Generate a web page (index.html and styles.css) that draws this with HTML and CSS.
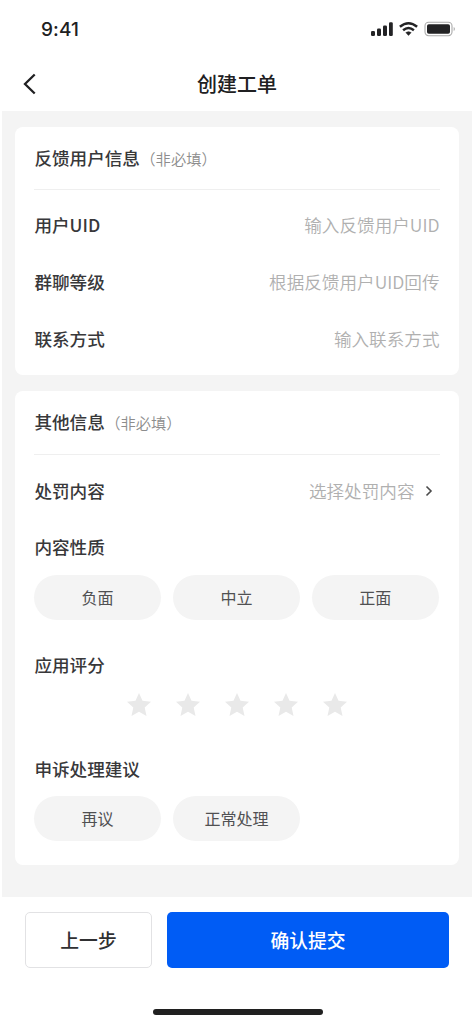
FILE: index.html
```html
<!DOCTYPE html>
<html lang="zh-CN">
<head>
<meta charset="utf-8">
<meta name="viewport" content="width=device-width, initial-scale=1">
<title>创建工单</title>
<link rel="stylesheet" href="styles.css">
</head>
<body>
<div class="screen">
  <header class="status">
    <span class="time">9:41</span>
    <svg class="status-icons" width="86" height="16" viewBox="0 0 86 16">
      <g fill="#232325">
        <rect x="1" y="10" width="4" height="5" rx="1.2"/>
        <rect x="7" y="7.5" width="4" height="7.5" rx="1.2"/>
        <rect x="13" y="4.5" width="4" height="10.5" rx="1.2"/>
        <rect x="19" y="1.3" width="3.8" height="13.7" rx="1.2"/>
        <path d="M35.9 11.6Q38.5 9.7 41.1 11.6L38.5 14.4Z" stroke="#232325" stroke-width=".6" stroke-linejoin="round"/>
        <rect x="57" y="3.3" width="23" height="9.4" rx="1.8"/>
        <path d="M83.7 6v4q1.2-.6 1.2-2t-1.2-2z" fill="#aaa"/>
      </g>
      <g fill="none" stroke="#232325" stroke-width="2.5">
        <path d="M29.900 5.800Q38.500-1.300 47.100 5.800"/>
        <path d="M33.100 9.200Q38.500 4.800 43.900 9.200"/>
      </g>
      <rect x="55" y="1.3" width="27" height="13.4" rx="3.6" fill="none" stroke="#aaa" stroke-width="1.1"/>
    </svg>
  </header>
  <nav class="nav">
    <svg class="back" width="14" height="22" viewBox="0 0 14 22"><path d="M11.7 1.5 2 11l9.7 9.5" fill="none" stroke="#202022" stroke-width="2.3"/></svg>
    <h1 class="title">创建工单</h1>
  </nav>
  <main class="content">
    <section class="card">
      <h2 class="card-head">反馈用户信息<span class="optional">（非必填）</span></h2>
      <div class="rows">
        <div class="row"><span>用户UID</span><span class="hint">输入反馈用户UID</span></div>
        <div class="row"><span>群聊等级</span><span class="hint">根据反馈用户UID回传</span></div>
        <div class="row"><span>联系方式</span><span class="hint">输入联系方式</span></div>
      </div>
    </section>
    <section class="card card-other">
      <h2 class="card-head">其他信息<span class="optional">（非必填）</span></h2>
      <div class="row select"><span>处罚内容</span><span class="hint">选择处罚内容</span>
        <svg class="chevron" width="8" height="12" viewBox="0 0 8 12"><path d="M1.5 1.5 6 6l-4.5 4.5" fill="none" stroke="#4b4b4b" stroke-width="1.6"/></svg>
      </div>
      <h3 class="label">内容性质</h3>
      <div class="pills"><button class="pill">负面</button><button class="pill">中立</button><button class="pill">正面</button></div>
      <h3 class="label label-rating">应用评分</h3>
      <div class="stars">
        <svg class="star" viewBox="0 0 24 24"><path id="star" d="M12 0 15.500 7.800 24 8.700 17.700 14.400 19.500 23 12 18.700 4.500 23 6.300 14.400 0 8.700 8.500 7.800Z"/></svg>
        <svg class="star" viewBox="0 0 24 24"><use href="#star"/></svg>
        <svg class="star" viewBox="0 0 24 24"><use href="#star"/></svg>
        <svg class="star" viewBox="0 0 24 24"><use href="#star"/></svg>
        <svg class="star" viewBox="0 0 24 24"><use href="#star"/></svg>
      </div>
      <h3 class="label label-advice">申诉处理建议</h3>
      <div class="pills"><button class="pill">再议</button><button class="pill">正常处理</button></div>
    </section>
  </main>
  <footer class="footer">
    <div class="actions"><button class="btn">上一步</button><button class="btn primary">确认提交</button></div>
    <div class="home"></div>
  </footer>
</div>
</body>
</html>
```
FILE: styles.css
```css
* { box-sizing: border-box; }
body {
  margin: 0;
  background: #fff;
  color: #38383a;
  font-family: "Noto Sans CJK SC", sans-serif;
  font-size: 17.6px;
}
h1, h2, h3 { margin: 0; font-size: inherit; font-weight: 500; }
button { font: inherit; padding: 0; border: 0; }
svg { display: block; }
.screen { height: 1026px; display: flex; flex-direction: column; overflow: hidden; }
.status {
  height: 58px;
  flex: none;
  display: flex;
  align-items: center;
  justify-content: space-between;
  padding: 0 18px 0 41px;
}
.time { font: 500 19px/24px Inter, sans-serif; color: #202022; letter-spacing: 0.1px; padding-top: 1px; }
.nav {
  height: 53px;
  flex: none;
  display: grid;
  grid-template-columns: 40px 1fr 40px;
  align-items: center;
  padding-bottom: 2px;
}
.back { margin-left: 23px; }
.title { font-size: 20px; line-height: 30px; text-align: center; color: #202022; }
.content {
  height: 786px;
  flex: none;
  margin: 0 2px;
  padding: 15.5px 13.5px 0 13px;
  background: #f4f4f4;
}
.card { height: 248.5px; padding: 0 19px 0 19.4px; border-radius: 8px; background: #fff; }
.card-other { height: 474px; margin-top: 16px; }
.card-head {
  height: 63.5px;
  display: flex;
  align-items: center;
  line-height: 26px;
  border-bottom: 1px solid #efefef;
}
.optional { font-size: 15.3px; font-weight: 350; color: #8d8d8d; margin-left: 1px; font-feature-settings: "halt"; padding-left: 7px; }
.rows { padding-top: 6px; }
.row { height: 57px; display: flex; align-items: center; justify-content: space-between; font-weight: 500; }
.hint { font-weight: 350; color: #b0b0b0; }
.select { margin-top: 7.5px; padding-right: 7px; }
.select .hint { margin-left: auto; }
.chevron { margin-left: 10px; }
.label { height: 55.5px; line-height: 56px; }
.pills { display: grid; grid-template-columns: repeat(3, 126.4px); gap: 12.5px; }
.pill { height: 45.5px; border-radius: 23px; background: #f4f4f4; color: #505052; font-size: 16px; }
.label-rating { height: 50px; line-height: 50px; margin-top: 19.5px; }
.stars { display: flex; justify-content: center; gap: 25.2px; padding-top: 3px; }
.star { width: 24px; height: 24px; fill: #e9e9e9; }
.label-advice { height: 52px; line-height: 50px; margin-top: 27px; }
.footer { flex: 1; display: flex; flex-direction: column; justify-content: space-between; align-items: center; padding: 15px 25px 11px; }
.actions { width: 100%; display: grid; grid-template-columns: 127px 282px; gap: 15px; }
.btn { height: 56px; border: 1px solid #e2e2e4; border-radius: 5px; background: #fff; color: #303032; font-size: 18.8px; font-weight: 500; padding-bottom: 2px; }
.primary { border: 0; background: #005cf5; color: #fff; }
.home { width: 170px; height: 6px; margin-left: 1px; border-radius: 3px; background: #202020; }
```
